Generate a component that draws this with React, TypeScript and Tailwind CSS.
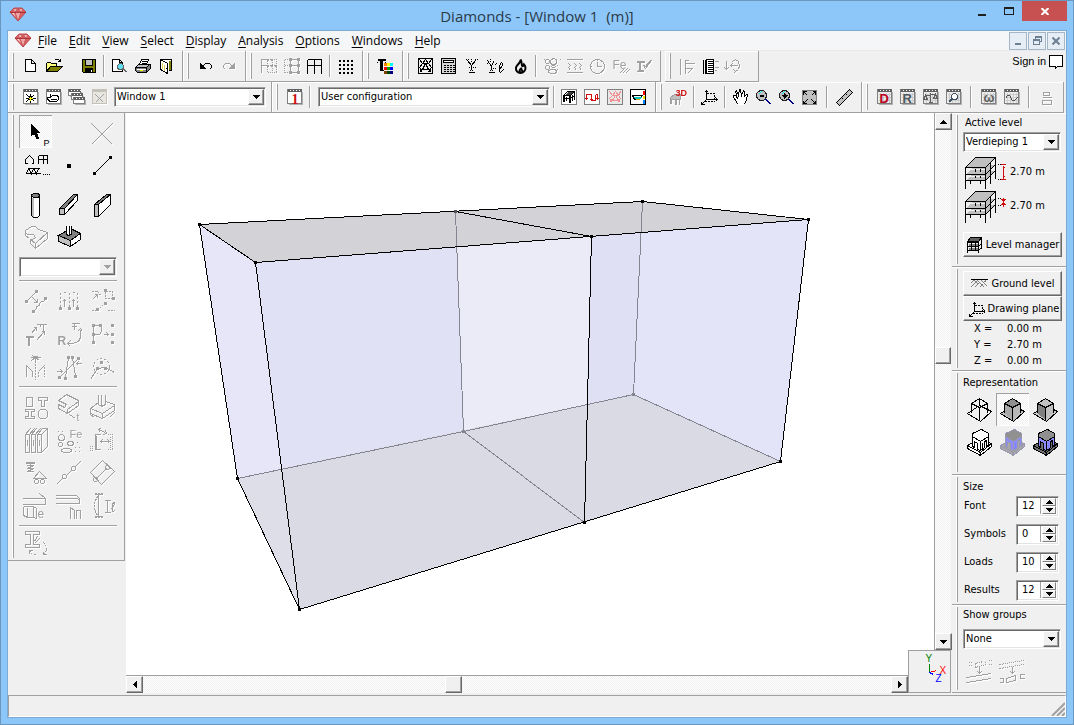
import { useState, type ReactNode } from "react";

const sunken =
  "border border-t-[#a0a0a0] border-l-[#a0a0a0] border-r-white border-b-white shadow-[inset_1px_1px_0_#696969,inset_-1px_-1px_0_#e3e3e3]";
const raised =
  "border border-t-white border-l-white border-r-[#696969] border-b-[#696969] bg-[#f0f0f0] shadow-[inset_-1px_-1px_0_#a0a0a0]";
const dither =
  "bg-[repeating-conic-gradient(#ffffff_0_25%,#f0f0f0_0_50%)] bg-[length:2px_2px]";

type GlyphProps = { w?: number; h?: number; muted?: boolean; children: ReactNode };

// integer coordinates are pixel centres
function Glyph({ w = 23, h, muted, children }: GlyphProps) {
  const height = h ?? w;
  return (
    <svg
      width={w}
      height={height}
      viewBox={`-0.5 -0.5 ${w} ${height}`}
      fill="none"
      stroke="currentColor"
      shapeRendering="crispEdges"
      aria-hidden="true"
      className={
        muted
          ? "shrink-0 text-[#a0a0a0] drop-shadow-[1px_1px_0_#ffffff]"
          : "shrink-0 text-black"
      }
    >
      {children}
    </svg>
  );
}

function Letter({
  x,
  y,
  size,
  fill = "currentColor",
  font = "Liberation Sans",
  bold = false,
  children,
}: {
  x: number;
  y: number;
  size: number;
  fill?: string;
  font?: string;
  bold?: boolean;
  children: string;
}) {
  return (
    <text x={x} y={y} fontSize={size} fill={fill} stroke="none" fontFamily={font} fontWeight={bold ? 700 : 400}>
      {children}
    </text>
  );
}

// little squares used as node markers
function Nodes({ at, s = 3 }: { at: number[][]; s?: number }) {
  return (
    <>
      {at.map(([x, y]) => (
        <rect key={`${x}-${y}`} x={x - s / 2} y={y - s / 2} width={s} height={s} fill="currentColor" stroke="none" />
      ))}
    </>
  );
}

function MiniWindow({ x = 4, y = 3, w = 14, h = 14, fill = "#ffffff" }) {
  return (
    <>
      <path d={`M${x + 1} ${y + h + 1}H${x + w + 1}V${y + 2}`} stroke="#b0b0b0" />
      <rect x={x} y={y} width={w} height={h} fill={fill} stroke="#808080" />
      <path d={`M${x} ${y}H${x + w}M${x} ${y + 1}H${x + w}M${x} ${y + 2}H${x + w}`} stroke="#606060" />
      <path d={`M${x + 2} ${y + 1}H${x + w}`} stroke="#ffffff" strokeDasharray="1 2" />
    </>
  );
}

function SheetWindow({ children }: { children: ReactNode }) {
  return (
    <>
      <MiniWindow fill="#ececec" />
      <path d="M7 6V16M10 6V16M13 6V16M16 6V16M5 8H17M5 11H17M5 14H17" stroke="#cccccc" />
      {children}
    </>
  );
}

function Magnifier({ children }: { children?: ReactNode }) {
  return (
    <>
      <path d="M13 13L18 18M14 13L19 18" stroke="#000080" />
      <circle cx="9" cy="9" r="5" fill="#c0c0c0" stroke="#202020" />
      <path d="M6 8L9 5M7 6H8" stroke="#00ffff" />
      {children}
    </>
  );
}

const bar: Record<string, ReactNode> = {
  new: <path d="M6 4H12L16 8V16H6ZM12 4V8H16" fill="#ffffff" />,
  open: (
    <>
      <path d="M4 16V8L5 7H8L9 8H14V11" fill="#ffff80" />
      <path d="M4 16L8 11H20L15 16Z" fill="#808000" />
      <path d="M12 5L13 4H16L18 6M18 3V6H15" />
    </>
  ),
  save: (
    <>
      <path d="M5 4H18V17H6L5 16Z" fill="#808000" />
      <rect x="8" y="4" width="7" height="6" fill="#c0c0c0" />
      <path d="M8 13H15V16H8ZM8 14H13M8 15H13" fill="#000000" />
      <path d="M14 14V16" stroke="#ffffff" />
    </>
  ),
  preview: (
    <>
      <path d="M4 4H11L14 7V16H4ZM11 4V7H14" fill="#ffffff" />
      <path d="M15 13L19 17M14 13L18 17" stroke="#606060" />
      <circle cx="12" cy="11" r="3" fill="#60e0f0" stroke="#606060" />
    </>
  ),
  print: (
    <>
      <path d="M8 9L10 4H17L15 9" fill="#ffffff" />
      <path d="M10 6H15M10 8H14" />
      <path d="M4 12L7 9H18L15 12Z" fill="#c0c0c0" />
      <path d="M4 12H15V17H6L4 15ZM15 17L19 13V9H18L15 12" fill="#808080" />
      <path d="M5 14H14" stroke="#ffffff" />
      <path d="M8 15H11" stroke="#ffff00" />
    </>
  ),
  door: (
    <>
      <path d="M6 4H17V15H14" fill="#ffffff" />
      <path d="M15 5V14M16 5V14" stroke="#808000" />
      <path d="M6 4L13 8V18L6 14Z" fill="#ffffff" />
      <path d="M8 7V13M10 9V15" stroke="#e0d860" />
      <path d="M12 12V13" />
    </>
  ),
  undo: (
    <>
      <path d="M6 8V13H11Z" fill="currentColor" />
      <path d="M8 11L11 8H15L17 10V12L15 14" />
    </>
  ),
  redo: (
    <>
      <path d="M17 8V13H12Z" fill="currentColor" />
      <path d="M15 11L12 8H8L6 10V12L8 14" />
    </>
  ),
  gridA: (
    <>
      <path d="M4 17V4H9M4 10H10" />
      <path d="M10 4H19V17H10ZM15 4V17M10 10H19" strokeDasharray="1 1" />
      <Nodes at={[[10, 4], [14, 4], [10, 10], [14, 10], [18, 10]]} s={2} />
    </>
  ),
  gridB: (
    <>
      <path d="M4 4H9M4 10H9M4 17H9M4 4V17" strokeDasharray="1 1" />
      <path d="M10 4H18V17H10ZM10 10H18" />
      <Nodes at={[[10, 4], [18, 4], [10, 10], [18, 10], [10, 17], [18, 17]]} />
    </>
  ),
  gridC: <path d="M4 4V18M11 4V18M18 4V18M4 4H18M4 10H18" />,
  dots: <Nodes at={[5, 9, 13, 17].flatMap((x) => [5, 9, 13, 17].map((y) => [x, y]))} s={2} />,
  palette: (
    <>
      <path d="M3 4H11M3 5H11M3 6V7M11 6V7M6 5V15M7 5V15M8 5V15M5 15H9" />
      <g stroke="none">
        <path d="M9 7h3v3h-3z" fill="#ff8000" />
        <path d="M12 7h3v3h-3z" fill="#ffff00" />
        <path d="M15 7h3v3h-3z" fill="#00ffff" />
        <path d="M9 11h3v3h-3z" fill="#ff0000" />
        <path d="M12 11h3v3h-3z" fill="#00a000" />
        <path d="M15 11h3v3h-3z" fill="#0000ff" />
        <path d="M9 15h3v3h-3z" fill="#804000" />
        <path d="M12 15h3v3h-3z" fill="#004000" />
        <path d="M15 15h3v3h-3z" fill="#000080" />
      </g>
    </>
  ),
  mesh: (
    <>
      <rect x="4" y="3" width="14" height="15" />
      <path d="M5 4L8 8L11 4L14 8L17 4M5 17L7 14M17 17L15 14M8 8L5 12L8 17M14 8L17 12L14 17M8 8H14M11 8L8 14H14L11 8" />
    </>
  ),
  calc: (
    <>
      <rect x="4" y="3" width="14" height="15" fill="#d8d8d8" />
      <path d="M6 5H16V7H6Z" fill="#ffffff" />
      <path d="M6 10H17M6 12H17M6 14H17M6 16H17" strokeDasharray="2 1" />
    </>
  ),
  phiA: (
    <>
      <path d="M7 5L11 10L15 5M11 10V14M8 17H14M9 16L11 14L13 16" />
      <path d="M5 4H8M14 4H17M8 12H15M11 3V7" strokeDasharray="1 1" />
    </>
  ),
  phiB: (
    <>
      <path d="M4 5L8 11L10 6M8 11V14M5 17H11M6 16L8 14L10 16M11 10L13 8" />
      <path d="M3 8H6M9 13H12M7 3V6" strokeDasharray="1 1" />
      <path d="M15 15L19 10V8L18 7L16 10V16L17 17L20 14" />
    </>
  ),
  fire: (
    <path
      d="M11 4C12 7 7 9 6.5 12C6 15 8 17.5 11 17.5C14 17.5 16 15 16 12.5C16 11 15 9.500 14.500 9C14 11 13 11 12.500 10C12 8 12.500 6 11 4ZM11 17C9.500 16 10 14 11.500 13C12 14 13.500 15 12.500 17"
      strokeWidth="2"
      shapeRendering="auto"
    />
  ),
  gears: (
    <>
      <circle cx="7" cy="6" r="2" />
      <circle cx="13" cy="6" r="3" />
      <circle cx="7" cy="12" r="2" />
      <ellipse cx="12" cy="16" rx="4" ry="2" />
      <path d="M3 4H20M16 10H20M16 14H20" strokeDasharray="1 3" />
      <ellipse cx="13" cy="11" rx="2" ry="1" />
    </>
  ),
  springs: <path d="M3 4H19M3 17H19M5 8L7 10L5 12L7 15M11 8L13 10L11 12L13 15M16 8L18 10L16 12L18 15" />,
  clock: (
    <>
      <circle cx="11" cy="11" r="7" />
      <path d="M11 6V11H15M11 4V5M11 17V18M4 11H5M17 11H18" />
    </>
  ),
  steel: (
    <>
      <Letter x={3} y={13} size={12}>Fe</Letter>
      <path d="M10 18L14 14M13 18L18 13M16 18L20 14" />
    </>
  ),
  beamCheck: (
    <>
      <path d="M4 6H12M4 7H12M8 7V15M4 16H11M7 7V15M5 15H11" />
      <path d="M11 10L13 13L19 5M12 10L13 11L18 5" />
    </>
  ),
  alignL: <path d="M4 3V19M9 4V18M9 8H18M9 13H16L11 18M9 5H12" />,
  alignB: (
    <>
      <path d="M4 4V18" />
      <rect x="7" y="4" width="7" height="14" fill="#ffffff" />
      <path d="M8 6H13M8 8H13M8 10H13M8 12H13M8 14H13M8 16H13M6 4V18" />
      <path d="M15 6H19M15 12H19M15 15H17" stroke="#a0a0a0" />
    </>
  ),
  rotate: <path d="M4 5V14M2 12L4 14L6 12M10 6L13 4L16 6L17 10L16 14L13 16M11 14L13 16L11 18M8 10H15M10 8L8 10L10 12" />,
  winNew: (
    <>
      <MiniWindow />
      <path d="M11 7V16M7 8L15 15M7 15L15 8M6 12H16" />
      <path d="M11 10V14M9 12H13" stroke="#ffff00" />
    </>
  ),
  winRename: (
    <>
      <MiniWindow />
      <path d="M5 11H8L10 9H15L16 11V13L14 15H8L6 14L5 12ZM8 13H14M8 7V11" />
    </>
  ),
  winCascade: (
    <>
      <MiniWindow x={3} y={3} w={12} h={6} />
      <MiniWindow x={6} y={7} w={11} h={6} />
      <MiniWindow x={8} y={11} w={11} h={6} />
    </>
  ),
  winClose: (
    <>
      <path d="M4 3H18V17H4ZM4 4H18M4 5H18" stroke="#c4c2b8" fill="#e8e6e0" />
      <path d="M7 8L15 16M15 8L7 16" stroke="#a0a0a0" />
    </>
  ),
  winInfo: (
    <>
      <MiniWindow />
      <Letter x={8} y={17} size={14} fill="#d01010" font="Liberation Serif" bold>1</Letter>
    </>
  ),
  building: (
    <>
      <rect x="3" y="3" width="15" height="15" fill="#ffffff" stroke="#808080" />
      <path d="M5 9L9 5H16L12 9ZM5 9V15M6 9V15M12 9V16M11 9V16M16 5V13M8 10V14M14 8V14M5 12H12L16 9" />
      <path d="M7 8H12M8 7H13M9 6H14" stroke="#404040" />
    </>
  ),
  redFrame: (
    <>
      <rect x="3" y="3" width="15" height="15" fill="#ffffff" stroke="#808080" />
      <path d="M5 13V8H10V14H14V8M14 8H16V13M4 12L5 13L6 12M9 13L10 14L11 13M15 12L16 13L17 12" stroke="#d01010" />
    </>
  ),
  redMesh: (
    <>
      <rect x="3" y="3" width="15" height="15" fill="#e8e8e8" stroke="#808080" />
      <path d="M5 5L8 9L11 5L14 9L16 5M5 16L7 13M16 16L14 13M8 9L5 12L8 16M14 9L16 12L13 16M8 9H14M11 9L8 14H14L11 9" stroke="#f09090" />
    </>
  ),
  results: (
    <>
      <rect x="3" y="3" width="15" height="15" fill="#ffffff" />
      <path d="M4 9H15M5 9L7 13H12L15 9" />
      <path d="M6 11H14M7 12H13" stroke="#00c0c0" />
      <path d="M8 13H12" stroke="#e0a000" />
      <path d="M17 4V8M16 4V8" stroke="#ff0000" />
      <path d="M17 9V12M16 9V12" stroke="#ffe000" />
      <path d="M17 13V17M16 13V17" stroke="#0080ff" />
    </>
  ),
  view3d: (
    <>
      <path d="M3 11L7 8H13V13H3ZM3 13V17M4 13V17M8 12V18M9 12V18M12 13V18" fill="#c0c0c0" stroke="#a0a0a0" />
      <Letter x={8} y={9} size={9} fill="#d01010" bold>3D</Letter>
    </>
  ),
  plane: (
    <>
      <path d="M8 4V13H19M6 6L8 4L10 6M17 11L19 13L17 15M8 13L3 18M3 18V15M3 18H6" />
      <path d="M8 7H16V15H6" strokeDasharray="2 1" />
    </>
  ),
  hand: <path d="M8 18L7 15L4 11V9H6L8 12L6 5L7 4L9 9L10 3H11L12 9L14 4L15 5V10L17 8H18L17 13L15 18" fill="#ffffff" />,
  zoomOut: (
    <Magnifier>
      <path d="M7 9H11M7 10H11" stroke="#000000" />
    </Magnifier>
  ),
  zoomIn: (
    <Magnifier>
      <path d="M6 9H12M9 6V12M10 7V11M7 10H11" stroke="#000000" />
    </Magnifier>
  ),
  zoomFit: (
    <>
      <rect x="4" y="4" width="14" height="14" fill="#c0c0c0" stroke="#808080" />
      <path d="M5 8V5H8M14 5H17V8M17 14V17H14M8 17H5V14M5 5L9 9M17 5L13 9M17 17L13 13M5 17L9 13" />
    </>
  ),
  ruler: (
    <>
      <path d="M3 16L16 3L19 6L6 19Z" fill="#c0c0c0" />
      <path d="M8 11L10 13M10 9L11 10M12 7L14 9M14 5L15 6M6 13L7 14" />
    </>
  ),
  docD: (
    <SheetWindow>
      <Letter x={6} y={16} size={13} fill="#c00020" bold>D</Letter>
    </SheetWindow>
  ),
  docR: (
    <SheetWindow>
      <Letter x={6} y={16} size={13} fill="#505860" bold>R</Letter>
    </SheetWindow>
  ),
  docScale: (
    <SheetWindow>
      <path d="M11 6V15M9 16H13M6 9L16 8M4 13L6 9L8 13ZM14 12L16 8L18 12Z" stroke="#606060" />
    </SheetWindow>
  ),
  docFind: (
    <SheetWindow>
      <circle cx="12" cy="10" r="3" fill="#ffffff" stroke="#405060" />
      <path d="M10 12L7 16M9 12L6 16" stroke="#405060" />
    </SheetWindow>
  ),
  docOmega: (
    <SheetWindow>
      <Letter x={6} y={15} size={13} fill="#606060" bold>ω</Letter>
    </SheetWindow>
  ),
  docWave: (
    <SheetWindow>
      <path d="M5 12L7 9L9 9L12 14L14 14L17 11" stroke="#505050" />
    </SheetWindow>
  ),
  stack: <path d="M8 6H14V9H8ZM7 14H16V18H7ZM7 11H16" />,
};

const tools: Record<string, ReactNode> = {
  select: (
    <>
      <path d="M12 9V20L15 18L17 23H19L17 17H20Z" fill="#000000" />
      <Letter x={24} y={30} size={9}>P</Letter>
    </>
  ),
  remove: <path d="M6 8L27 29M27 8L6 29" />,
  structures: (
    <>
      <path d="M6 15V11L10 7L14 11V15H12M6 15H8M19 7H28V15M19 7V15M24 7V15M19 11H28" />
      <path d="M9 20H20M9 20L7 25M9 20L12 25L14 20L17 25L19 20M6 25H21" />
      <path d="M23 26H30" strokeDasharray="1 1" />
    </>
  ),
  node: <Nodes at={[[16, 17]]} s={4} />,
  line: (
    <>
      <path d="M9 25L25 9" />
      <Nodes at={[[9, 25], [25, 9]]} />
    </>
  ),
  column: (
    <>
      <path d="M12 7V27L14 29H18L20 27V7" fill="#ffffff" />
      <path d="M14 9V28M13 9V27" stroke="#c0c0c0" />
      <ellipse cx="16" cy="7" rx="4" ry="2" fill="#808080" />
    </>
  ),
  beam: (
    <>
      <path d="M7 20L21 6H25L12 20Z" fill="#808080" />
      <path d="M12 20L25 6V12L12 26Z" fill="#ffffff" />
      <path d="M7 20H12V26H7Z" fill="#c0c0c0" />
    </>
  ),
  wall: (
    <>
      <path d="M9 16L21 6H25L13 16Z" fill="#808080" />
      <path d="M13 16L25 6V16L13 28Z" fill="#ffffff" />
      <path d="M9 16H13V28H9Z" fill="#c0c0c0" />
    </>
  ),
  slab: (
    <path d="M6 9L12 5H16L19 8L28 11V17L16 27L11 22V19L16 16L14 13H8L6 11ZM16 27V22L28 11M16 22L11 18M6 11V14L10 17" />
  ),
  foundation: (
    <>
      <path d="M6 14L18 7L28 12V18L18 25L6 20Z" fill="#ffffff" />
      <path d="M6 14L18 7L28 12L18 19Z" fill="#808080" />
      <path d="M6 14L18 19V25L6 20Z" fill="#c0c0c0" />
      <path d="M14 4V13L16 14L19 13V4" fill="#ffffff" />
      <path d="M17 4V14" />
    </>
  ),
  offsetLine: (
    <>
      <path d="M7 17L17 7M14 27L17 24V22L20 21V19L22 17H24L26 14M12 12L18 18M18 14V18H14" />
      <Nodes at={[[7, 17], [17, 7], [26, 14], [14, 27]]} />
    </>
  ),
  copyNodes: (
    <>
      <path d="M8 8V23M17 8V23M25 8V23M11 8H13M20 8H22" strokeDasharray="2 2" />
      <path d="M12 15V22M10 17L12 15L14 17M21 15V22M19 17L21 15L23 17" />
      <Nodes at={[[8, 24], [17, 24], [25, 24]]} />
    </>
  ),
  spread: (
    <>
      <path d="M6 7H12L16 12M20 7H27V14M20 7V14H27M6 26H12L20 18M22 26H29" strokeDasharray="2 1" />
      <path d="M7 15L12 10M9 10H12V13" />
      <Nodes at={[[20, 6], [28, 14], [20, 19], [12, 25]]} />
    </>
  ),
  moveText: (
    <>
      <path d="M6 19H14M6 20H14M10 20V28M9 20V28" />
      <path d="M12 16L17 10M14 10H17V13M17 23L25 14M22 14H25V17M17 7H27M21 7V9M24 7V13" />
    </>
  ),
  rotateTool: (
    <>
      <Letter x={5} y={27} size={12} bold>R</Letter>
      <path d="M28 12V20L26 24L20 26H15M18 23L15 26L18 29M25 14L28 11L30 14M19 6H27M19 9H24M22 6V12" />
    </>
  ),
  scaleTool: (
    <>
      <path d="M8 8V25M8 8H14L16 10V14L14 17H8M18 17H23M21 15L23 17L21 19" />
      <Nodes at={[[8, 8], [8, 17], [8, 25], [15, 8], [27, 8], [27, 17], [27, 25]]} />
    </>
  ),
  mirror: (
    <>
      <path d="M7 26V15L13 21V26M11 7H21M12 10L16 7L20 10M16 5V12M13 5L19 9M19 5L13 9" />
      <path d="M16 13V29M19 26V21L25 15V26" strokeDasharray="2 1" />
    </>
  ),
  intersect: (
    <>
      <path d="M13 27L16 7M7 27L26 8M20 7L23 26M4 21H10M8 19L10 21L8 23M29 13H24M26 11L24 13L26 15" />
      <Nodes at={[[7, 27], [13, 28], [16, 7], [20, 7], [26, 8], [23, 26]]} />
    </>
  ),
  circleNodes: (
    <>
      <circle cx="16" cy="16" r="8" strokeDasharray="2 2" />
      <path d="M5 29L12 18L20 17L29 22" />
      <Nodes at={[[16, 12], [12, 18], [20, 18]]} />
    </>
  ),
  sections: (
    <path d="M7 7H13V16H7ZM19 7H28V10H25V16H22V10H19ZM6 19H15V21H12V26H15V28H6V26H9V21H6ZM21 19H26L28 21V26L26 28H21L19 26V21Z" />
  ),
  thickness: (
    <>
      <path d="M6 10L14 4L26 10V15L15 23L6 18V14L12 17L14 14L8 11ZM15 23V19L26 11M17 24L23 28" />
      <Letter x={24} y={30} size={10}>t</Letter>
    </>
  ),
  footing: (
    <path d="M5 18L13 12M20 11L29 14V20L17 28L5 23V18L17 23L29 15M17 23V28M13 4V14L16 16L20 14V4M16 4V16M9 27L5 24M24 27L29 22" />
  ),
  library: (
    <>
      <path d="M6 11V29H10V11ZM12 11V29H16V11ZM18 11V29H22V11ZM6 11L11 5M10 11L15 5M12 11L17 5M16 11L21 5M18 11L23 5H28V23L22 29M22 11L28 5" />
      <path d="M8 16V22M14 16V22M20 16V22" />
    </>
  ),
  steelGears: (
    <>
      <Letter x={17} y={14} size={11}>Fe</Letter>
      <circle cx="9" cy="14" r="3" />
      <circle cx="8" cy="21" r="2" />
      <ellipse cx="14" cy="27" rx="5" ry="2" />
      <ellipse cx="18" cy="20" rx="3" ry="2" />
      <path d="M5 8H13M22 24H28M22 28H28M25 18V22" strokeDasharray="1 3" />
    </>
  ),
  reinforcement: (
    <>
      <path d="M15 11H10V26H15M11 12V25M15 18H24M17 16L15 18L17 20M22 16L24 18L22 20M13 6L20 9M16 4L13 6L15 9M18 11L21 10L20 7" />
      <path d="M22 11H27V26H22M5 22V27M25 13V25M7 22V27" strokeDasharray="1 1" />
    </>
  ),
  support: (
    <>
      <path d="M6 6H15M6 7H15M11 9V7M7 9H14L8 12H14L8 15H14M20 15L14 22H27Z" />
      <circle cx="17" cy="25" r="2" />
      <circle cx="23" cy="25" r="2" />
    </>
  ),
  hinge: (
    <>
      <path d="M4 28L10 22M14 19L19 14M22 11L28 5" />
      <circle cx="12" cy="20" r="2" />
      <circle cx="21" cy="12" r="2" />
    </>
  ),
  plateHinge: (
    <>
      <path d="M5 16L17 4L29 15L16 28ZM11 22L21 12" />
      <circle cx="10" cy="23" r="2" />
      <circle cx="22" cy="11" r="2" />
    </>
  ),
  ecc: (
    <>
      <path d="M3 9H26V15H3M20 4L26 9M4 17V26L8 28M4 17H8M8 18V28H14V17H8M14 17L17 19V29L14 28" />
      <Letter x={18} y={28} size={12}>e</Letter>
    </>
  ),
  plateEcc: (
    <>
      <path d="M3 6H24L27 9V14M3 9H24L27 10M3 14H27M18 18V29M18 18L22 21V29M24 29V21H28V29" />
    </>
  ),
  buckling: (
    <>
      <path d="M9 5H17M9 27H17M13 5V27M19 11H25M19 23H25M22 11V23" />
      <path d="M9 4H18M9 28H18M12 7L9 13V20L12 26" strokeDasharray="2 1" />
      <path d="M26 20L29 15V13L27 14V22L30 21" />
    </>
  ),
  profileCopy: (
    <>
      <path d="M6 2H20V5H14V15H20V18H6V15H11V5H6ZM15 12L18 7M15 14L20 9" />
      <path d="M10 21L13 25H16M24 13L27 17V21L24 25" strokeDasharray="2 1" />
      <path d="M10 24V21H13M24 22V25H27" />
    </>
  ),
};

type FrameProps = { top?: string; side?: string; front?: string; base?: string; line?: string; wall?: string; solid?: boolean };

// small table-like frame on a base plate
function FrameGlyph({ top = "none", side = "none", front = "none", base = "none", line = "#000000", wall = "#ffffff", solid }: FrameProps) {
  if (solid) {
    return (
      <Glyph w={33}>
        <g stroke={line}>
          <path d="M4 19L16 12L28 17V20L17 29L4 22Z" fill={base} />
          <path d="M4 19L17 26L28 17M17 26V29" />
          <path d="M9 10L17 15V24L14 23V17L11 15V21L9 20Z" fill={front} />
          <path d="M17 15L25 10V19L23 20V14L21 15V21L17 24Z" fill={side} />
          <path d="M9 7L18 3L25 7V10L17 15L9 10Z" fill={top} />
          <path d="M19 16V22" stroke={wall} />
        </g>
      </Glyph>
    );
  }
  return (
    <Glyph w={33}>
      <g stroke={line}>
        <path d="M4 20L16 12L28 18L17 28Z" fill={base} />
        <path d="M8 10L16 14V26L8 20Z" fill={front} stroke="none" />
        <path d="M16 14L24 10V19L16 26Z" fill={side} stroke="none" />
        <path d="M8 10L16 5L24 10L16 14Z" fill={top} />
        <path d="M8 10V19M16 14V26M24 10V19" />
        {base === "none" && <path d="M16 5V12" />}
      </g>
    </Glyph>
  );
}

function LevelGlyph({ gap }: { gap: "wide" | "narrow" }) {
  return (
    <Glyph w={44} h={34}>
      {[25, 19, 12].map((y) => (
        <path key={y} d={`M2 ${y}L12 ${y - 10}H32L22 ${y}Z`} fill="#c0c0c0" stroke={y === 12 ? "#000000" : "none"} />
      ))}
      <path d="M3 13H21V14H3ZM3 20H21V21H3Z" fill="#f0f0f0" stroke="none" />
      <path d="M2 19H22L32 9M2 25H22L32 15" />
      <path d="M2 12V33M22 12V33M32 2V23M27 7V28M17 25V28M7 25V28M12 13V16M17 13V16M12 20V22M17 20V22" />
      {gap === "wide" ? (
        <>
          <path d="M34 9H38M34 24H38" strokeDasharray="1 1" />
          <path d="M37 9H42M37 24H42M40 10V23M39 12H41M39 21H41" stroke="#d01010" />
        </>
      ) : (
        <>
          <path d="M34 9H38M34 16H38" strokeDasharray="1 1" />
          <path d="M37 10H42M38 11H41M37 15H42M38 14H41M40 8V17" stroke="#d01010" />
        </>
      )}
    </Glyph>
  );
}

function Gem() {
  return (
    <svg width="18" height="16" viewBox="0 0 18 16" aria-hidden="true" className="shrink-0">
      <path d="M5 1H13L17 5L9 14L1 5Z" fill="#d86060" stroke="#c04850" />
      <path d="M4 2L6 5L9 1L12 5L14 2Z" fill="#f8d8d8" stroke="#c04850" strokeWidth="0.6" />
      <path d="M6 5L9 14L12 5Z" fill="#f0a8a8" stroke="#b84048" strokeWidth="0.6" />
      <path d="M1 5.500H17" stroke="#a02830" strokeWidth="0.8" />
      <path d="M3 6H5L7 10Z" fill="#f8dcdc" />
    </svg>
  );
}

function Triangle({ dir, muted }: { dir: "up" | "down" | "left" | "right"; muted?: boolean }) {
  const d = {
    up: "M0 4H7L4 0H3Z",
    down: "M0 0H7L4 4H3Z",
    left: "M4 0V7L0 4V3Z",
    right: "M0 0V7L4 4V3Z",
  }[dir];
  const flat = dir === "up" || dir === "down";
  return (
    <svg width={flat ? 7 : 4} height={flat ? 4 : 7} shapeRendering="crispEdges" aria-hidden="true">
      <path d={d} fill={muted ? "#a0a0a0" : "#000000"} />
    </svg>
  );
}

function Grip() {
  return <div className="my-[2px] w-[2px] shrink-0 self-stretch border-l border-white bg-[#a0a0a0]" />;
}

function Band({ className = "", children }: { className?: string; children: ReactNode }) {
  return (
    <div
      className={`flex h-[31px] shrink-0 items-center border-r border-b border-[#a0a0a0] pr-[5px] pl-1 shadow-[inset_1px_1px_0_#ffffff] ${className}`}
    >
      <Grip />
      <div className="w-[5px]" />
      {children}
    </div>
  );
}

function Sep({ wide }: { wide?: boolean }) {
  return (
    <div className={`h-[22px] w-[2px] shrink-0 border-l border-[#a0a0a0] bg-white ${wide ? "mx-[5px]" : "mx-[3px]"}`} />
  );
}

function Tool({ name, label, muted }: { name: string; label: string; muted?: boolean }) {
  return (
    <button type="button" title={label} aria-label={label} disabled={muted} className="h-[23px] w-[23px] shrink-0">
      <Glyph muted={muted}>{bar[name]}</Glyph>
    </button>
  );
}

function Combo({
  label,
  options,
  className = "",
  disabled,
}: {
  label: string;
  options: string[];
  className?: string;
  disabled?: boolean;
}) {
  return (
    <div className={`relative h-5 ${className}`}>
      <select
        aria-label={label}
        disabled={disabled}
        className={`block h-5 w-full appearance-none bg-white pr-5 pl-[2px] text-[11px] leading-4 text-black outline-none ${sunken}`}
      >
        {options.map((o) => (
          <option key={o}>{o}</option>
        ))}
      </select>
      <span
        className={`pointer-events-none absolute top-[2px] right-[2px] flex h-4 w-4 items-center justify-center ${raised}`}
      >
        <Triangle dir="down" muted={disabled} />
      </span>
    </div>
  );
}

const menu = ["File", "Edit", "View", "Select", "Display", "Analysis", "Options", "Windows", "Help"];

function TitleBar() {
  return (
    <header className="relative flex h-[29px] shrink-0 items-start justify-between">
      <div className="pt-[6px] pl-[2px]">
        <Gem />
      </div>
      <h1 className="absolute inset-x-0 top-[5px] text-center font-['Open_Sans',sans-serif] text-[15px] leading-5 whitespace-pre text-[#2b3a48]">
        Diamonds - [Window 1{"  "}(m)]
      </h1>
      <div className="relative flex h-5">
        <button type="button" aria-label="Minimize" className="flex w-[27px] items-end justify-center pb-[5px]">
          <span className="h-[2px] w-2 bg-[#1f1f1f]" />
        </button>
        <button type="button" aria-label="Maximize" className="flex w-[27px] items-center justify-center">
          <span className="h-2 w-[10px] border border-t-2 border-[#1f1f1f]" />
        </button>
        <button type="button" aria-label="Close" className="flex w-[45px] items-center justify-center bg-[#c75050]">
          <svg width="8" height="7" viewBox="0 0 8 7" stroke="#ffffff" strokeWidth="2">
            <path d="M0.5 0L7.5 7M7.5 0L0.5 7" />
          </svg>
        </button>
      </div>
    </header>
  );
}

function MenuBar() {
  const child =
    "flex h-[18px] w-[18px] items-center justify-center border border-[#a3b5c9] bg-[#e6edf5] text-[#6d7f92]";
  return (
    <nav className="flex h-5 shrink-0 items-center border-b border-[#e8e9ea] bg-[#f5f6f7] pl-[6px]">
      <Gem />
      <div className="flex flex-1 font-['Open_Sans',sans-serif] text-[12px] leading-4">
        {menu.map((m) => (
          <button key={m} type="button" className="px-[6px]">
            <span className="underline underline-offset-2">{m[0]}</span>
            {m.slice(1)}
          </button>
        ))}
      </div>
      <div className="flex gap-px pr-px">
        <button type="button" aria-label="Minimize child" className={child}>
          <svg width="8" height="8" shapeRendering="crispEdges">
            <path d="M1 6h6v2h-6z" fill="currentColor" />
          </svg>
        </button>
        <button type="button" aria-label="Restore child" className={child}>
          <svg width="9" height="9" viewBox="-0.5 -0.5 9 9" fill="none" stroke="currentColor" shapeRendering="crispEdges">
            <path d="M2 2V0H8V5H6M2 1H8M0 3H6V8H0ZM0 4H6" />
          </svg>
        </button>
        <button type="button" aria-label="Close child" className={child}>
          <svg width="8" height="8" viewBox="0 0 8 8" stroke="currentColor" strokeWidth="2">
            <path d="M0.5 0.5L7.5 7.5M7.5 0.5L0.5 7.5" />
          </svg>
        </button>
      </div>
    </nav>
  );
}

function Toolbars() {
  return (
    <div className="shrink-0">
      <div className="flex">
        <Band>
          <Tool name="new" label="New" />
          <Tool name="open" label="Open" />
          <div className="w-3" />
          <Tool name="save" label="Save" />
          <Sep />
          <Tool name="preview" label="Print preview" />
          <Tool name="print" label="Print" />
          <Tool name="door" label="Exit" />
        </Band>
        <Band>
          <Tool name="undo" label="Undo" />
          <Tool name="redo" label="Redo" muted />
        </Band>
        <Band>
          <Tool name="gridA" label="Grid lines" muted />
          <Tool name="gridB" label="Grid points" muted />
          <Tool name="gridC" label="Grid" />
          <Sep />
          <Tool name="dots" label="Snap grid" />
        </Band>
        <Band>
          <Tool name="palette" label="Text and colours" />
        </Band>
        <Band>
          <Tool name="mesh" label="Mesh" />
          <Tool name="calc" label="Calculate" />
          <Tool name="phiA" label="Global analysis" />
          <Tool name="phiB" label="Buckling analysis" />
          <div className="w-[3px]" />
          <Tool name="fire" label="Fire" />
          <Sep />
          <Tool name="gears" label="Reinforcement" muted />
          <Tool name="springs" label="Springs" muted />
          <Tool name="clock" label="Creep" muted />
          <Tool name="steel" label="Steel" muted />
          <Tool name="beamCheck" label="Beam check" muted />
        </Band>
        <Band className="ml-1">
          <Tool name="alignL" label="Diagram" muted />
          <Tool name="alignB" label="Table" />
          <Tool name="rotate" label="Rotate" muted />
          <div className="w-2" />
        </Band>
        <button
          type="button"
          className="mt-[2px] mr-[3px] ml-auto flex h-4 items-center gap-[3px] font-['Liberation_Sans',sans-serif] text-[11px] leading-4"
        >
          Sign in
          <Glyph w={14} h={16}>
            <path d="M0 2H13V13H8L6 15V13H0Z" fill="#ffffff" />
          </Glyph>
        </button>
      </div>
      <div className="flex">
        <Band>
          <Tool name="winNew" label="New window" />
          <Tool name="winRename" label="Rename window" />
          <Tool name="winCascade" label="Cascade" />
          <Tool name="winClose" label="Close window" muted />
          <Combo label="Window" options={["Window 1"]} className="ml-[3px] w-[152px]" />
        </Band>
        <Band>
          <Tool name="winInfo" label="Window number" />
          <Sep />
          <Combo label="Configuration" options={["User configuration"]} className="ml-1 w-[232px]" />
          <Sep />
          <Tool name="building" label="Geometry" />
          <Tool name="redFrame" label="Loads" />
          <Tool name="redMesh" label="Mesh view" />
          <Tool name="results" label="Results" />
        </Band>
        <Band>
          <Tool name="view3d" label="3D view" muted />
          <Sep />
          <Tool name="plane" label="Plane view" />
          <Sep />
          <Tool name="hand" label="Pan" />
          <Tool name="zoomOut" label="Zoom out" />
          <Tool name="zoomIn" label="Zoom in" />
          <Tool name="zoomFit" label="Zoom to fit" />
          <Sep wide />
          <Tool name="ruler" label="Measure" />
        </Band>
        <Band>
          <Tool name="docD" label="Data" />
          <Tool name="docR" label="Results table" />
          <Tool name="docScale" label="Balance" />
          <Tool name="docFind" label="Inspect" />
          <Sep wide />
          <Tool name="docOmega" label="Frequencies" />
          <Tool name="docWave" label="Modes" />
          <Sep wide />
          <Tool name="stack" label="Stack" muted />
        </Band>
      </div>
    </div>
  );
}

function PaletteRow({ names, muted = false }: { names: string[]; muted?: boolean }) {
  return (
    <div className="grid grid-cols-3">
      {names.map((n) => {
        if (!n) return <span key="gap" />;
        const off = muted || n === "remove" || n === "slab";
        const on = n === "select";
        return (
          <button
            key={n}
            type="button"
            aria-label={n}
            aria-pressed={on}
            disabled={off}
            className={`h-[33px] w-[33px] ${on ? `${dither} shadow-[inset_1px_1px_0_#a0a0a0,inset_-1px_-1px_0_#ffffff]` : ""}`}
          >
            <Glyph w={33} muted={off}>
              {tools[n]}
            </Glyph>
          </button>
        );
      })}
    </div>
  );
}

function Rule() {
  return <div className="mt-[3px] mb-[2px] h-[2px] w-[98px] border-t border-[#a0a0a0] bg-white" />;
}

function Palette() {
  return (
    <aside className="w-[118px] shrink-0">
      <div className="flex w-[117px] border-r border-b border-[#a0a0a0] pl-1">
        <Grip />
        <div className="ml-[5px] w-[99px] pt-[2px]">
          <PaletteRow names={["select", "", "remove"]} />
          <PaletteRow names={["structures", "node", "line"]} />
          <div className="pt-[7px]">
            <PaletteRow names={["column", "beam", "wall"]} />
            <PaletteRow names={["slab", "foundation"]} />
          </div>
          <Combo label="Selection type" options={[""]} disabled className="mt-[3px] w-[98px]" />
          <Rule />
          <PaletteRow muted names={["offsetLine", "copyNodes", "spread"]} />
          <PaletteRow muted names={["moveText", "rotateTool", "scaleTool"]} />
          <PaletteRow muted names={["mirror", "intersect", "circleNodes"]} />
          <Rule />
          <PaletteRow muted names={["sections", "thickness", "footing"]} />
          <PaletteRow muted names={["library", "steelGears", "reinforcement"]} />
          <PaletteRow muted names={["support", "hinge", "plateHinge"]} />
          <PaletteRow muted names={["ecc", "plateEcc", "buckling"]} />
          <Rule />
          <div className="h-[31px]">
            <PaletteRow muted names={["profileCopy"]} />
          </div>
        </div>
      </div>
    </aside>
  );
}

const corners = [
  [73, 111], [516, 88], [682, 106], [465, 123], [129, 149],
  [111, 365], [654, 348], [458, 409], [173, 496],
];

function Model() {
  return (
    <svg width="809" height="562" viewBox="-0.5 -0.5 809 562" fill="none" shapeRendering="crispEdges" role="img" aria-label="3D model">
      <path d="M73 111L129 149L155 355L111 365Z" fill="#e6e6f8" />
      <path d="M129 149L330 133L337 318L155 355Z" fill="#e0e1f4" />
      <path d="M330 133L465 123L460 291L337 318Z" fill="#ebebf7" />
      <path d="M465 123L515 119L507 281L460 291Z" fill="#dfe0f4" />
      <path d="M515 119L682 106L654 348L507 281Z" fill="#e3e4f8" />
      <path d="M111 365L155 355L173 496Z" fill="#dedee9" />
      <path d="M155 355L507 281L654 348L458 409L173 496Z" fill="#dadae4" />
      <path d="M73 111L329 98L516 88L682 106L465 123L129 149Z" fill="#d3d2d7" />
      <path d="M111 365L337 318L507 281L654 348M337 318L458 409M329 98L337 318M516 88L507 281" stroke="#858592" />
      <path d="M73 111L516 88L682 106L129 149ZM329 98L465 123M73 111L111 365L173 496L129 149M465 123L458 409M682 106L654 348L173 496" stroke="#000000" />
      {corners.map(([x, y]) => (
        <rect key={`${x},${y}`} x={x - 1.5} y={y - 1.5} width="3" height="3" fill="#000000" />
      ))}
      <rect x="327.5" y="96.5" width="3" height="3" fill="#505058" />
      <rect x="335.5" y="316.5" width="3" height="3" fill="#858592" />
      <rect x="505.5" y="279.5" width="3" height="3" fill="#858592" />
    </svg>
  );
}

function ScrollButton({ dir }: { dir: "up" | "down" | "left" | "right" }) {
  return (
    <button
      type="button"
      aria-label={`Scroll ${dir}`}
      className={`flex h-[17px] w-[17px] shrink-0 items-center justify-center ${raised}`}
    >
      <Triangle dir={dir} />
    </button>
  );
}

function Viewport() {
  return (
    <section className="relative flex min-w-0 flex-1 flex-col">
      <div className="flex min-h-0 flex-1">
        <div className="min-w-0 flex-1 overflow-hidden bg-white">
          <Model />
        </div>
        <div className={`mb-[25px] flex w-[17px] flex-col border-l border-[#a0a0a0] ${dither}`}>
          <ScrollButton dir="up" />
          <div className="flex-[217]" />
          <div className={`h-[17px] w-4 ${raised}`} />
          <div className="flex-[268]" />
          <ScrollButton dir="down" />
        </div>
      </div>
      <div className={`mr-[43px] flex h-[18px] border-t border-[#a0a0a0] ${dither}`}>
        <ScrollButton dir="left" />
        <div className="flex-[302]" />
        <div className={`h-[17px] w-[17px] ${raised}`} />
        <div className="flex-[428]" />
        <ScrollButton dir="right" />
      </div>
      <div className="absolute right-0 bottom-0 h-[43px] w-[43px] border border-[#a0a0a0] bg-[#f0f0f0]">
        <Glyph w={41}>
          <path d="M20 12V21" stroke="#008000" />
          <path d="M20 21L27 19" stroke="#ff0000" />
          <path d="M20 21L24 23" stroke="#0000ff" />
          <Letter x={16} y={10} size={10} fill="#008000">Y</Letter>
          <Letter x={30} y={22} size={10} fill="#ff0000">X</Letter>
          <Letter x={26} y={30} size={10} fill="#0000ff">Z</Letter>
        </Glyph>
      </div>
    </section>
  );
}

function Panel({ className = "", children }: { className?: string; children: ReactNode }) {
  return (
    <div className={`flex border-b border-[#a0a0a0] pl-1 shadow-[inset_0_1px_0_#ffffff] ${className}`}>
      <Grip />
      <div className="min-w-0 flex-1 pl-[5px]">{children}</div>
    </div>
  );
}

function WideButton({ icon, children }: { icon: ReactNode; children: string }) {
  return (
    <button
      type="button"
      className={`flex h-[25px] w-[99px] items-center justify-center gap-[3px] whitespace-nowrap ${raised}`}
    >
      {icon}
      {children}
    </button>
  );
}

function Spinner({ id, label, value }: { id: string; label: string; value: number }) {
  const [count, setCount] = useState(value);
  const step = "flex h-[8px] w-[14px] items-center justify-center border border-t-white border-l-white border-r-[#808080] border-b-[#808080] bg-[#f0f0f0]";
  return (
    <div className="flex h-7 items-center justify-between pr-[7px]">
      <label htmlFor={id} className="pl-px">
        {label}
      </label>
      <div className={`flex h-[21px] w-[43px] items-center bg-white py-[2px] pr-[2px] pl-[5px] ${sunken}`}>
        <input
          id={id}
          type="text"
          inputMode="numeric"
          value={count}
          onChange={(e) => setCount(Number(e.target.value) || 0)}
          className="min-w-0 flex-1 bg-transparent outline-none"
        />
        <div className="flex flex-col border-l border-[#a0a0a0] pl-px">
          <button type="button" aria-label={`Increase ${label}`} className={step} onClick={() => setCount(count + 1)}>
            <Triangle dir="up" />
          </button>
          <button type="button" aria-label={`Decrease ${label}`} className={step} onClick={() => setCount(count - 1)}>
            <Triangle dir="down" />
          </button>
        </div>
      </div>
    </div>
  );
}

const coords = [
  ["X =", "0.00 m"],
  ["Y =", "2.70 m"],
  ["Z =", "0.00 m"],
];

function SidePanel() {
  return (
    <aside className="flex w-[115px] shrink-0 flex-col pl-px">
      <Panel className="h-[154px]">
        <p className="mt-[2px] pl-[2px]">Active level</p>
        <Combo label="Active level" options={["Verdieping 1"]} className="mt-px w-[98px]" />
        <div className="mt-[3px] flex h-[34px] items-center">
          <LevelGlyph gap="wide" />
          <span className="pl-[3px]">2.70 m</span>
        </div>
        <div className="flex h-[34px] items-center">
          <LevelGlyph gap="narrow" />
          <span className="pl-[3px]">2.70 m</span>
        </div>
        <div className="mt-[9px]">
          <WideButton
            icon={
              <Glyph w={17}>
                <path d="M1 5L4 1H15L12 5Z" fill="#606060" />
                <path d="M2 7H11V10H2ZM2 11H11V14H2Z" fill="#808080" stroke="none" />
                <path d="M1 5V16M12 5V16M15 1V12M5 6V14M9 6V14M1 6H12M1 10H12L15 7M1 14H12L15 11" />
              </Glyph>
            }
          >
            Level manager
          </WideButton>
        </div>
      </Panel>
      <Panel className="h-[104px]">
        <div className="pt-1">
          <WideButton
            icon={
              <Glyph w={18} h={11}>
                <path d="M0 1H17" />
                <path d="M0 9L7 2M4 9L9 4M0 5L3 2M8 3L14 9M11 2L17 8M9 9L12 6M4 2L8 6M14 3L16 2" stroke="#808080" />
              </Glyph>
            }
          >
            Ground level
          </WideButton>
          <WideButton icon={<Glyph w={19} h={21}>{bar.plane}</Glyph>}>Drawing plane</WideButton>
        </div>
        <dl>
          {coords.map(([axis, value]) => (
            <div key={axis} className="flex h-4 items-center pl-[11px]">
              <dt className="w-[33px]">{axis}</dt>
              <dd>{value}</dd>
            </div>
          ))}
        </dl>
      </Panel>
      <Panel className="h-[104px]">
        <p className="mt-1">Representation</p>
        <div className="mt-[2px] grid w-[99px] grid-cols-3">
          <button type="button" aria-label="Wireframe">
            <FrameGlyph />
          </button>
          <button
            type="button"
            aria-label="Transparent"
            aria-pressed
            className={`${dither} shadow-[inset_1px_1px_0_#a0a0a0,inset_-1px_-1px_0_#ffffff]`}
          >
            <FrameGlyph top="#909090" side="#b8b8b8" front="#a8a8a8" base="#c0c0c0" />
          </button>
          <button type="button" aria-label="Hidden line">
            <FrameGlyph top="#c0c0c0" side="#c0c0c0" front="#808080" base="#c8c8c8" />
          </button>
          <button type="button" aria-label="Solid wireframe">
            <FrameGlyph top="#ffffff" side="#ffffff" front="#ffffff" base="#ffffff" wall="#000000" solid />
          </button>
          <button type="button" aria-label="Solid colour">
            <FrameGlyph top="#909090" side="#8c8cff" front="#8c8cff" base="#a8a8a8" line="#9898b0" wall="#8080ff" solid />
          </button>
          <button type="button" aria-label="Solid colour with lines">
            <FrameGlyph top="#909090" side="#8c8cff" front="#8c8cff" base="#707070" wall="#8080ff" solid />
          </button>
        </div>
      </Panel>
      <Panel className="h-[130px]">
        <p className="mt-1 h-[14px]">Size</p>
        <div className="-mt-px">
          <Spinner id="size-font" label="Font" value={12} />
          <Spinner id="size-symbols" label="Symbols" value={0} />
          <Spinner id="size-loads" label="Loads" value={10} />
          <Spinner id="size-results" label="Results" value={12} />
        </div>
      </Panel>
      <Panel className="min-h-0 flex-1">
        <p className="mt-[2px]">Show groups</p>
        <Combo label="Show groups" options={["None"]} className="mt-[6px] w-[98px]" />
        <div className="mt-[5px] flex">
          <button type="button" aria-label="Join groups" disabled>
            <Glyph w={33} muted>
              <path d="M5 8H8M5 11H8M12 9L20 7M12 13L22 10M25 6H28M25 10H28M12 9V12M22 7V10" strokeDasharray="1 1" />
              <path d="M16 12V19M14 17L16 19L18 17M3 23L28 19M3 28L28 24" />
            </Glyph>
          </button>
          <button type="button" aria-label="Split groups" disabled>
            <Glyph w={33} muted>
              <path d="M3 10L28 6M3 14L28 10" strokeDasharray="1 1" />
              <path d="M16 12V19M14 17L16 19L18 17M3 24H7V28H3M10 24L19 21V26L10 28ZM28 20H24V24H28" />
            </Glyph>
          </button>
        </div>
      </Panel>
    </aside>
  );
}

export default function App() {
  return (
    <div className="flex h-screen flex-col overflow-hidden border border-[#6b97bf] bg-[#8dc7fa] px-[6px] pb-[6px] font-['DejaVu_Sans_Condensed','Open_Sans',sans-serif] text-[11px] leading-4 text-black">
      <TitleBar />
      <main className="flex min-h-0 flex-1 flex-col border border-[#7aaad6] bg-[#f0f0f0]">
        <MenuBar />
        <Toolbars />
        <div className="flex min-h-0 flex-1">
          <Palette />
          <Viewport />
          <SidePanel />
        </div>
        <footer className="mt-[2px] flex h-[22px] shrink-0 items-end justify-end border border-t-[#a0a0a0] border-r-white border-b-white border-l-[#a0a0a0]">
          <svg width="14" height="14" stroke="#a0a0a0" strokeWidth="2" aria-hidden="true">
            <path d="M1 14L14 1M6 14L14 6M11 14L14 11" />
          </svg>
        </footer>
      </main>
    </div>
  );
}
